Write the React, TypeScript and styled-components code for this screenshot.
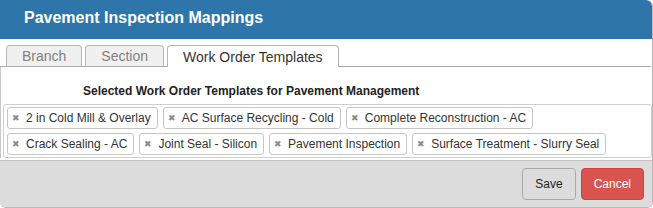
import styled, { createGlobalStyle } from 'styled-components';

const GlobalStyle = createGlobalStyle`
  html, body {
    margin: 0;
    padding: 0;
    background: #ffffff;
  }
  body {
    font-family: "Liberation Sans", Arial, sans-serif;
  }
`;

const templates = [
  '2 in Cold Mill & Overlay',
  'AC Surface Recycling - Cold',
  'Complete Reconstruction - AC',
  'Crack Sealing - AC',
  'Joint Seal - Silicon',
  'Pavement Inspection',
  'Surface Treatment - Slurry Seal',
];

const tabs = ['Branch', 'Section', 'Work Order Templates'];

const App = (): JSX.Element => {
  const active = 'Work Order Templates';

  return (
    <>
      <GlobalStyle />
      <Dialog>
        <Header>
          <Title>Pavement Inspection Mappings</Title>
        </Header>

        <TabBar>
          {tabs.map((tab) => (
            <Tab key={tab} isActive={tab === active}>
              {tab}
            </Tab>
          ))}
        </TabBar>

        <Panel>
          <PanelTitle>Selected Work Order Templates for Pavement Management</PanelTitle>
          <ChipBox>
            {templates.map((name) => (
              <Chip key={name}>
                <Remove>✖</Remove>
                {name}
              </Chip>
            ))}
          </ChipBox>
        </Panel>

        <Footer>
          <Button>Save</Button>
          <Button variant="danger">Cancel</Button>
        </Footer>
      </Dialog>
    </>
  );
};

const Dialog = styled.div`
  width: 653px;
  height: 208px;
  box-sizing: border-box;
  display: flex;
  flex-direction: column;
  border-right: 1px solid #b8b8b8;
  border-bottom: 1px solid #b8b8b8;
  border-radius: 0 6px 6px 6px;
  overflow: hidden;
  background: #ffffff;
`;

const Header = styled.div`
  height: 39px;
  flex: none;
  background: #2e76aa;
  display: flex;
  align-items: center;
  padding: 0 24px;
  border-radius: 0 6px 0 0;
`;

const Title = styled.h1`
  margin: -3px 0 0;
  color: #ffffff;
  font-size: 16px;
  font-weight: bold;
`;

const TabBar = styled.div`
  height: 28px;
  flex: none;
  box-sizing: border-box;
  display: flex;
  align-items: flex-end;
  gap: 3px;
  padding-left: 6px;
  border-bottom: 1px solid #aaaaaa;
  margin-right: 1px;
`;

const Tab = styled.div<{ isActive?: boolean }>`
  box-sizing: border-box;
  padding: 0 15px;
  display: flex;
  align-items: center;
  font-size: 14px;
  color: ${({ isActive }) => (isActive ? '#333333' : '#808080')};
  background: ${({ isActive }) => (isActive ? '#ffffff' : '#f0f0f0')};
  border: 1px solid #b5b5b5;
  border-bottom: none;
  border-radius: 4px 4px 0 0;
  margin-bottom: ${({ isActive }) => (isActive ? '-1px' : '0')};
  height: ${({ isActive }) => (isActive ? '22px' : '21px')};
`;

const Panel = styled.div`
  flex: none;
  display: flex;
  flex-direction: column;
  padding: 0 0 0 2px;
  border-left: 1px solid #c8c8c8;
`;

const PanelTitle = styled.div`
  font-size: 12px;
  font-weight: bold;
  color: #222222;
  padding: 17px 0 0 80px;
  height: 37px;
  box-sizing: border-box;
`;

const ChipBox = styled.div`
  display: flex;
  flex-wrap: wrap;
  align-content: flex-start;
  gap: 4px 5px;
  padding: 2px 3px;
  border: 1px solid #cfcfcf;
  border-radius: 3px;
  height: 54px;
  box-sizing: border-box;
`;

const Chip = styled.div`
  height: 22px;
  box-sizing: border-box;
  display: flex;
  align-items: center;
  padding: 0 6px 0 4px;
  border: 1px solid #c6c6c6;
  border-radius: 3px;
  font-size: 12px;
  color: #333333;
  background: #ffffff;
`;

const Remove = styled.span`
  font-size: 9px;
  color: #8a8a8a;
  margin-right: 6px;
`;

const Footer = styled.div`
  margin-top: 2px;
  flex: 1;
  background: #dcdcdc;
  border-top: 1px solid #c4c4c4;
  display: flex;
  justify-content: flex-end;
  align-items: flex-start;
  gap: 5px;
  padding: 7px 8px 0 0;
  box-sizing: border-box;
`;

const Button = styled.button<{ variant?: 'danger' }>`
  height: 32px;
  padding: 0 12px;
  font-family: "Liberation Sans", Arial, sans-serif;
  font-size: 12px;
  border-radius: 4px;
  cursor: pointer;
  color: ${({ variant }) => (variant === 'danger' ? '#ffffff' : '#222222')};
  background: ${({ variant }) => (variant === 'danger' ? '#d9534f' : '#dcdcdc')};
  border: 1px solid ${({ variant }) => (variant === 'danger' ? '#d43f3a' : '#a8a8a8')};
`;

export default App;
